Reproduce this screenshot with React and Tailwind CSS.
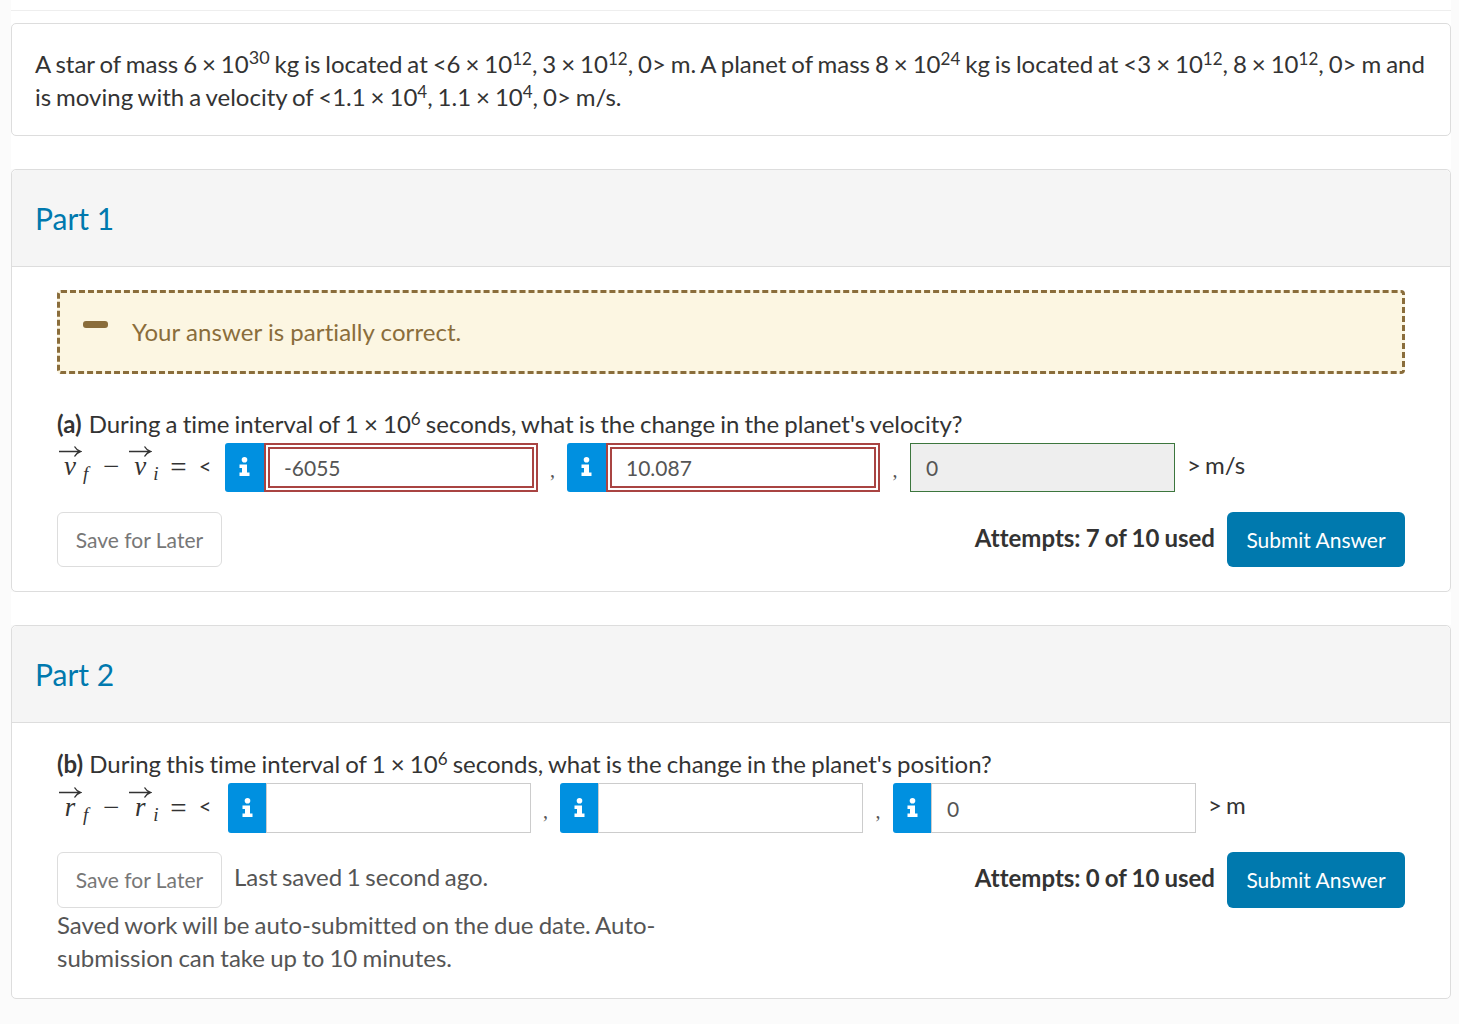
const Sup = ({ children }) => <sup className="text-[17px]">{children}</sup>;

const Vec = ({ l, s }) => (
  <span className="inline-flex items-baseline">
    <span className="relative inline-block w-[26px] text-center [font-family:'Liberation_Serif',serif] italic text-[27px] leading-none">
      {l}
      <svg className="absolute left-[1px] top-[-9px]" width="24" height="14" viewBox="0 0 24 14" fill="none" stroke="#333" strokeWidth="1.4">
        <path d="M1 7.500H22M16.500 2.500C18 5 19.500 6.500 22.500 7.500C19.500 8.500 18 10 16.500 12.500" />
      </svg>
    </span>
    <span className="relative top-[5px] w-[14px] [font-family:'Liberation_Serif',serif] italic text-[19px] leading-none">{s}</span>
  </span>
);

const Math1 = ({ l, w }) => (
  <div className={`flex items-center h-[46px] pb-[2px] text-[#333] ${w}`}>
    <Vec l={l} s="f" />
    <span className="ml-[6px] mr-[8px] [font-family:'Liberation_Serif',serif] text-[29px] leading-none">−</span>
    <Vec l={l} s="i" />
    <span className="ml-[3px] [font-family:'Liberation_Serif',serif] text-[29px] leading-none relative top-[1px]">=</span>
    <span className="ml-[12px] text-[22px] leading-none relative top-[-1px]">&lt;</span>
  </div>
);

const Info = ({ w = "w-[39px]" }) => (
  <div className={`${w} shrink-0 h-full bg-[#0090e0] rounded-l-[3px] flex items-center justify-center pb-[2px]`}>
    <svg width="13" height="19" viewBox="0 0 13 19" fill="#fff">
      <circle cx="6.500" cy="2.800" r="2.800" />
      <path d="M1.500 7.500H9V15.500H11.500V19H1.500V15.500H4V11H1.500Z" />
    </svg>
  </div>
);

const Field = ({ value, wrong, w }) => (
  <input
    readOnly
    value={value}
    className={`${w} h-full outline-none bg-white text-[#555] text-[21px] ${
      wrong ? "border-[6px] border-double border-[#a94442] pl-[14px]" : "border border-[#ccc] pl-[15px]"
    }`}
  />
);

const Comma = ({ w }) => (
  <span className={`${w} shrink-0 text-center text-[20px] text-[#555] [font-family:'Liberation_Serif',serif] relative top-[3px]`}>,</span>
);

const Btn = ({ children, extra = "" }) => (
  <button className={`w-[165px] shrink-0 border border-[#ddd] rounded-[6px] bg-white text-[#777] text-[21px] h-full [word-spacing:0] ${extra}`}>{children}</button>
);

const Submit = ({ extra = "" }) => (
  <button className={`w-[178px] h-full shrink-0 rounded-[6px] bg-[#0079ae] text-white text-[21px] [word-spacing:0] ${extra}`}>Submit Answer</button>
);

const Attempts = ({ children }) => (
  <span className="font-bold text-[24px] leading-[33px] text-[#333] mr-[12px] mt-[9px] [word-spacing:-0.7px]">{children}</span>
);

const Head = ({ children }) => (
  <div className="h-[97px] bg-[#f5f5f5] border-b border-[#ddd] rounded-t-[5px] pl-[23px] flex items-center text-[#0079ae] text-[30px] [word-spacing:0]">
    {children}
  </div>
);

export default function App() {
  return (
    <div className="bg-[#fbfbfb] min-h-[1024px] pl-[11px] pr-[8px] [font-family:Lato,sans-serif] [font-variant-ligatures:none] [word-spacing:-1px] text-[24px] leading-[33px] text-[#333]">
      <div className="bg-white pt-[10px] pb-[33px]">
        <div className="border-t border-[#eee] h-[13px]" />
        <div className="h-[113px] border border-[#ddd] rounded-[5px] pl-[23px] pr-[15px] pt-[23px] [word-spacing:-1.2px]">
          A star of mass 6 × 10<sup>30</sup> kg is located at &lt;6 × 10<Sup>12</Sup>, 3 × 10<Sup>12</Sup>, 0&gt; m. A planet of mass 8 × 10<Sup>24</Sup> kg is located at &lt;3 × 10<Sup>12</Sup>, 8 × 10<Sup>12</Sup>, 0&gt; m and is moving with a velocity of &lt;1.1 × 10<Sup>4</Sup>, 1.1 × 10<Sup>4</Sup>, 0&gt; m/s.
        </div>
      </div>

      <section className="h-[423px] bg-white border border-[#ddd] rounded-[5px]">
        <Head>Part 1</Head>
        <div className="pl-[45px] pr-[45px] pt-[23px]">
          <div className="h-[84px] pb-[2px] bg-[#fcf6e2] border-[3px] border-dashed border-[#8a6d3b] rounded-[4px] flex items-center text-[#8a6d3b] [word-spacing:0] tracking-[0.06px]">
            <span className="w-[25px] h-[7px] bg-[#8a6d3b] rounded-[3px] ml-[23px] mr-[24px] mb-[13px]" />
            <span>Your answer is partially correct.</span>
          </div>
          <p className="mt-[33px]"><b className="mr-[2px]">(a)</b> During a time interval of 1 × 10<Sup>6</Sup> seconds, what is the change in the planet's velocity?</p>
          <div className="flex items-center h-[49px] mt-[3px]">
            <Math1 l="v" w="w-[168px]" />
            <Info />
            <Field value="-6055" wrong w="w-[274px]" />
            <Comma w="w-[29px]" />
            <Info />
            <Field value="10.087" wrong w="w-[274px]" />
            <Comma w="w-[30px]" />
            <input readOnly value="0" className="w-[265px] h-full border border-[#3c763d] bg-[#eee] text-[#555] text-[21px] pl-[15px] outline-none" />
            <span className="ml-[12px] mt-[-6px] [word-spacing:-2px]">&gt; m/s</span>
          </div>
          <div className="flex items-start h-[55px] mt-[20px]">
            <Btn>Save for Later</Btn>
            <span className="flex-1" />
            <Attempts>Attempts: 7 of 10 used</Attempts>
            <Submit />
          </div>
        </div>
      </section>

      <div className="bg-white h-[33px]" />

      <section className="h-[374px] bg-white border border-[#ddd] rounded-[5px]">
        <Head>Part 2</Head>
        <div className="pl-[45px] pr-[45px] pt-[24px]">
          <p><b className="mr-[1px]">(b)</b> During this time interval of 1 × 10<Sup>6</Sup> seconds, what is the change in the planet's position?</p>
          <div className="flex items-center h-[50px] mt-[3px]">
            <Math1 l="r" w="w-[171px]" />
            <Info w="w-[38px]" />
            <Field value="" w="w-[265px]" />
            <Comma w="w-[29px]" />
            <Info w="w-[38px]" />
            <Field value="" w="w-[265px]" />
            <Comma w="w-[30px]" />
            <Info w="w-[38px]" />
            <Field value="0" w="w-[265px]" />
            <span className="ml-[12px] mt-[-8px] [word-spacing:-2px]">&gt; m</span>
          </div>
          <div className="flex items-start mt-[19px]">
            <div className="w-[650px] text-[#555]">
              <div className="flex items-start h-[56px]">
                <Btn extra="pb-[2px]">Save for Later</Btn>
                <span className="ml-[12px] mt-[8px] [word-spacing:-1.5px]">Last saved 1 second ago.</span>
              </div>
              <p className="mt-[0px]">Saved work will be auto-submitted on the due date. Auto-submission can take up to 10 minutes.</p>
            </div>
            <span className="flex-1" />
            <div className="flex items-start h-[56px]">
              <Attempts>Attempts: 0 of 10 used</Attempts>
              <Submit extra="pb-[2px]" />
            </div>
          </div>
        </div>
      </section>
    </div>
  );
}
